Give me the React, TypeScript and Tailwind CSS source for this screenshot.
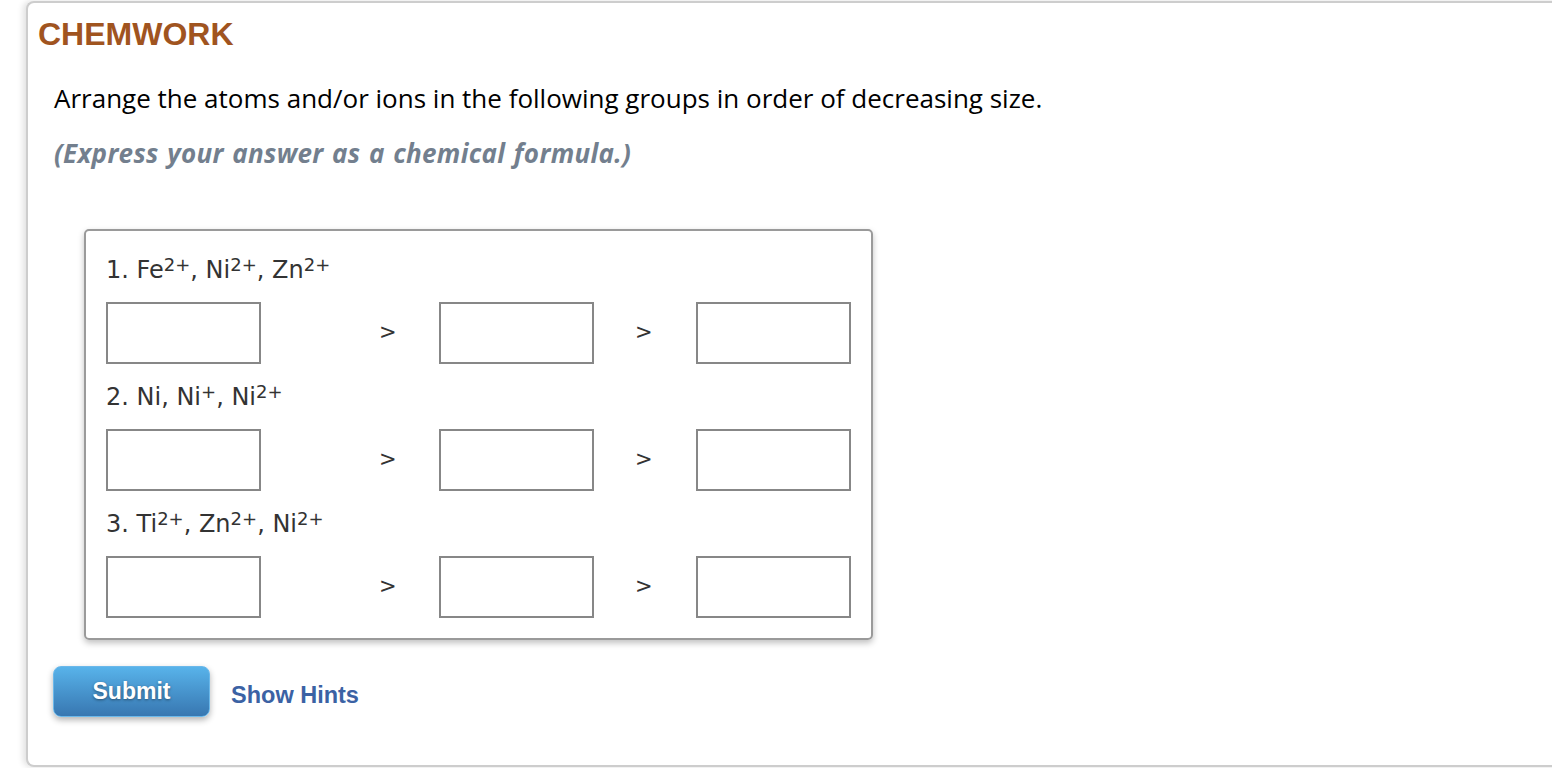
import React from "react";

const Sup = ({ children }: { children: React.ReactNode }) => (
  <sup className="text-[18px] relative top-[-7px] align-baseline">{children}</sup>
);

const Box = () => <div className="w-[155px] h-[62px] border-2 border-[#878787] bg-white shrink-0" />;

const Row = ({ label }: { label: React.ReactNode }) => (
  <div className="flex flex-col">
    <div className="h-[30px] text-[24px] leading-[30px] text-[#333] whitespace-nowrap font-['DejaVu_Sans',Verdana,sans-serif]">
      {label}
    </div>
    <div className="flex items-center mt-[17px] font-['DejaVu_Sans',Verdana,sans-serif] text-[21px] text-[#333]">
      <Box />
      <div className="w-[178px] flex pl-[118px]">&gt;</div>
      <Box />
      <div className="w-[102px] flex pl-[41px]">&gt;</div>
      <Box />
    </div>
  </div>
);

export default function App() {
  return (
    <div className="w-[1552px] h-[768px] overflow-hidden bg-white">
      <div className="ml-[26px] mt-[1px] h-[766px] w-[1540px] rounded-tl-[8px] rounded-bl-[8px] border-2 border-[#cdcdcd] border-r-0 bg-white shadow-[-3px_0_6px_rgba(0,0,0,0.12)] pl-[10px]">
        <h1 className="text-[32px] font-bold leading-[32px] text-[#a0541f] pt-[15px] font-['Liberation_Sans',Arial,sans-serif]">
          CHEMWORK
        </h1>
        <div className="pl-[16px] font-['Open_Sans',sans-serif]">
          <p className="text-[26px] text-black mt-[30px] leading-[36px] whitespace-nowrap">
            Arrange the atoms and/or ions in the following groups in order of decreasing size.
          </p>
          <p className="text-[26px] font-bold italic text-[#737f8e] mt-[19px] leading-[36px] tracking-[0.3px] [word-spacing:1.5px] whitespace-nowrap">
            (Express your answer as a chemical formula.)
          </p>
          <div className="mt-[58px] ml-[30px] w-[789px] h-[411px] border-2 border-[#9a9a9a] rounded-[5px] shadow-[0_3px_6px_rgba(0,0,0,0.25)] pl-[20px] pt-[24px] flex flex-col gap-[18px]">
            <Row label={<>1. Fe<Sup>2+</Sup>, Ni<Sup>2+</Sup>, Zn<Sup>2+</Sup></>} />
            <Row label={<>2. Ni, Ni<Sup>+</Sup>, Ni<Sup>2+</Sup></>} />
            <Row label={<>3. Ti<Sup>2+</Sup>, Zn<Sup>2+</Sup>, Ni<Sup>2+</Sup></>} />
          </div>
          <div className="flex items-center mt-[26px] gap-[21px] font-['Liberation_Sans',Arial,sans-serif]">
            <button className="-ml-[1px] w-[157px] h-[51px] rounded-[8px] border border-[#6bb8ea] bg-gradient-to-b from-[#58b3ea] to-[#3877b1] text-white font-bold text-[23px] shadow-[0_3px_6px_rgba(0,0,0,0.3)] [text-shadow:0_1px_3px_rgba(0,0,0,0.45)]">
              Submit
            </button>
            <span className="text-[23.5px] font-bold text-[#3b62a4] mt-[8px]">Show Hints</span>
          </div>
        </div>
      </div>
    </div>
  );
}
